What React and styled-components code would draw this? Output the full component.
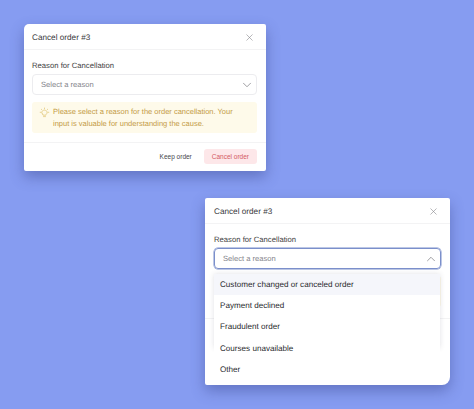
import React from 'react';
import styled, { createGlobalStyle } from 'styled-components';
import { X, ChevronDown, ChevronUp } from 'lucide-react';

const Global = createGlobalStyle`
  html, body { margin: 0; padding: 0; }
  body {
    background: #869cf1;
    font-family: "Liberation Sans", Arial, sans-serif;
    text-rendering: geometricPrecision;
  }
`;

const Page = styled.div`
  width: 474px;
  height: 409px;
  overflow: hidden;
  padding: 24px;
  box-sizing: border-box;
`;

const Dialog = styled.section`
  position: relative;
  box-sizing: border-box;
  width: ${p => p.$width}px;
  height: ${p => p.$height}px;
  margin-left: ${p => p.$left || 0}px;
  margin-top: ${p => p.$top || 0}px;
  background: #fff;
  border-radius: ${p => p.$open ? '2px 2px 8px 2px' : '5px 2px 2px 2px'};
  box-shadow: 0 6px 14px rgba(50, 62, 130, 0.42);
`;

const Header = styled.header`
  box-sizing: border-box;
  height: 26px;
  padding: 1px 8px 0 ${p => p.$open ? 9 : 8}px;
  display: flex;
  align-items: center;
  justify-content: space-between;
  border-bottom: 1px solid #f3f3f4;
  font-size: 8.2px;
  color: #3a3a3e;
`;

const Close = styled(X)`
  width: 11px;
  height: 11px;
  margin-right: 3px;
  color: #85858b;
`;

const Body = styled.div`
  padding: 11px 9px 0 ${p => p.$open ? 9 : 8}px;
`;

const Label = styled.div`
  font-size: 7.7px;
  line-height: 9px;
  color: #3e3e42;
  margin-bottom: 4px;
`;

const Select = styled.div`
  box-sizing: border-box;
  height: 21px;
  padding: 0 2px 0 8px;
  display: flex;
  align-items: center;
  justify-content: space-between;
  border-radius: 4px;
  border: 1px solid ${p => p.$open ? '#7b8fcb' : '#ececef'};
  box-shadow: ${p => p.$open ? '0 0 0 0.5px #7b8fcb' : 'none'};
  font-size: 7.6px;
  color: #85858b;
`;

const Notice = styled.div`
  margin-top: 7px;
  height: 31px;
  padding: 3.6px 8px 3px 7px;
  box-sizing: border-box;
  display: flex;
  gap: 3px;
  background: #fefaea;
  border-radius: 3px;
  font-size: 7.5px;
  line-height: 12.4px;
  color: #c49a45;
`;

const BulbIcon = styled.svg`
  flex: none;
  width: 11px;
  height: 11px;
  margin-top: 1px;
  fill: none;
  stroke: #e2c97f;
  stroke-width: 0.8;
  stroke-linecap: round;
`;

const Footer = styled.footer`
  margin-top: ${p => p.$gap}px;
  height: 28px;
  padding: 6px 9px 0;
  border-top: 1px solid #f3f3f4;
  display: flex;
  align-items: flex-start;
  justify-content: flex-end;
  gap: 4px;
`;

const Action = styled.button`
  height: 15px;
  padding: 0 8px;
  border: 0;
  border-radius: 3px;
  font-family: inherit;
  font-size: 6.5px;
  background: ${p => p.$danger ? '#fde7e9' : 'transparent'};
  color: ${p => p.$danger ? '#d45a62' : '#45454a'};
`;

const Menu = styled.ul`
  position: absolute;
  left: 9px;
  top: 76px;
  width: 226px;
  margin: 0;
  padding: 0;
  list-style: none;
  background: #fff;
  border-radius: 4px;
`;

const MenuShadow = styled.div`
  position: absolute;
  left: 9px;
  top: 76px;
  width: 226px;
  height: 74px;
  box-shadow: 0 0 5px rgba(60, 60, 90, 0.16);
`;

const Option = styled.li`
  height: 21.2px;
  padding-left: 6px;
  display: flex;
  align-items: center;
  font-size: 8.1px;
  color: #2a2a2e;
  background: ${p => p.$active ? '#f5f6fb' : 'transparent'};
`;

const reasons = [
  'Customer changed or canceled order',
  'Payment declined',
  'Fraudulent order',
  'Courses unavailable',
  'Other',
];

function DialogHead({ open }) {
  return (
    <Header $open={open}>
      <span>Cancel order #3</span>
      <Close strokeWidth={1.3} />
    </Header>
  );
}

function Bulb() {
  return (
    <BulbIcon viewBox="0 0 11 11">
      <path d="M3.7 7.2C2.9 6.6 2.6 5.8 2.9 4.8 3.2 3.8 4.4 3.1 5.5 3.2 6.7 3.2 7.8 4 8.1 4.9 8.3 5.8 8 6.6 7.3 7.2 7 7.5 6.9 7.8 6.9 8.2H4.1C4.1 7.8 4 7.5 3.7 7.2Z" />
      <path d="M4.5 9.6H6.5M5.5 1V1.9M1.2 5.3H2M9 5.3H9.8M2.3 2.2 2.9 2.8M8.7 2.2 8.1 2.8" />
    </BulbIcon>
  );
}

export default function App() {
  return (
    <Page>
      <Global />
      <Dialog $width={242} $height={147}>
        <DialogHead />
        <Body>
          <Label>Reason for Cancellation</Label>
          <Select>
            <span>Select a reason</span>
            <ChevronDown size={14} strokeWidth={1.2} color="#77777d" />
          </Select>
          <Notice>
            <Bulb />
            <span>Please select a reason for the order cancellation. Your input is valuable for understanding the cause.</span>
          </Notice>
        </Body>
        <Footer $gap={9}>
          <Action>Keep order</Action>
          <Action $danger>Cancel order</Action>
        </Footer>
      </Dialog>

      <Dialog $open $width={245} $height={187} $left={181} $top={27}>
        <DialogHead open />
        <Body $open>
          <Label>Reason for Cancellation</Label>
          <Select $open>
            <span>Select a reason</span>
            <ChevronUp size={14} strokeWidth={1.2} color="#77777d" />
          </Select>
          <Notice />
        </Body>
        <Footer $gap={11} />
        <MenuShadow />
        <Menu>
          {reasons.map((r, i) => (
            <Option key={r} $active={i === 0}>{r}</Option>
          ))}
        </Menu>
      </Dialog>
    </Page>
  );
}
